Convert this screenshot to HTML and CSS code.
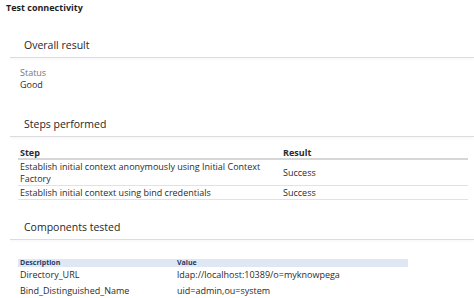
FILE: index.html
```html
<!DOCTYPE html>
<html lang="en">
<head>
  <meta charset="UTF-8" />
  <title>Test connectivity</title>
  <link rel="stylesheet" href="styles.css">
</head>
<body>

  <div class="title">Test connectivity</div>

  <div class="section">
    <div class="section-head">Overall result</div>
    <div class="section-body status-body">
      <div class="field-label">Status</div>
      <div class="field-value">Good</div>
    </div>
  </div>

  <div class="section">
    <div class="section-head">Steps performed</div>
    <div class="section-body">
      <table class="steps">
        <thead>
          <tr>
            <th class="col-step">Step</th>
            <th>Result</th>
          </tr>
        </thead>
        <tbody>
          <tr>
            <td>Establish initial context anonymously using Initial Context Factory</td>
            <td>Success</td>
          </tr>
          <tr>
            <td>Establish initial context using bind credentials</td>
            <td>Success</td>
          </tr>
        </tbody>
      </table>
    </div>
  </div>

  <div class="section">
    <div class="section-head">Components tested</div>
    <div class="section-body">
      <table class="components">
        <thead>
          <tr>
            <th class="col-desc">Description</th>
            <th>Value</th>
          </tr>
        </thead>
        <tbody>
          <tr>
            <td>Directory_URL</td>
            <td>ldap://localhost:10389/o=myknowpega</td>
          </tr>
          <tr>
            <td>Bind_Distinguished_Name</td>
            <td>uid=admin,ou=system</td>
          </tr>
        </tbody>
      </table>
    </div>
  </div>

</body>
</html>
```

FILE: styles.css
```css
body {
  margin: 0;
  padding: 0;
  font-family: 'Open Sans', sans-serif;
  color: #2b2b2b;
  background: white;
  font-size: 9px;
}

.title {
  font-weight: 700;
  font-size: 9px;
  line-height: 15px;
  padding-left: 6px;
  color: #1e1e1e;
}

.section {
  margin-left: 10px;
}

.section-head {
  font-size: 10.5px;
  line-height: 16px;
  padding: 0 0 4px 14px;
  border-bottom: 1px solid #dcdcdc;
  box-shadow: 0 2px 2px rgba(0,0,0,0.025);
  color: #262626;
}

.section:nth-of-type(2) .section-head {
  margin-top: 22px;
}

.section:nth-of-type(3) .section-head {
  margin-top: 25px;
}

.section:nth-of-type(4) .section-head {
  margin-top: 19px;
}

.section-body {
  padding: 10px 6px 0 8px;
}

.status-body {
  padding: 9px 10px 0 10px;
}

.field-label {
  line-height: 12px;
  color: #777;
}

.field-value {
  line-height: 12px;
}

table {
  border-collapse: collapse;
}

.steps {
  width: 450px;
}

.steps th {
  text-align: left;
  font-weight: 700;
  line-height: 11px;
  padding: 0 2px;
  border-bottom: 2px solid #d6d6d6;
}

.steps td {
  line-height: 12px;
  padding: 1px 2px 0 2px;
  border-bottom: 1px solid #e2e2e2;
}

.steps .col-step {
  width: 259px;
}

.components {
  width: 390px;
  margin-top: 9px;
}

.components th {
  text-align: left;
  font-size: 7px;
  font-weight: 700;
  line-height: 8px;
  padding: 0 2px;
  color: #1f3a66;
  background: #dfe7f2;
}

.components td {
  line-height: 16px;
  padding: 0 2px;
}

.components .col-desc {
  width: 153px;
}
```
